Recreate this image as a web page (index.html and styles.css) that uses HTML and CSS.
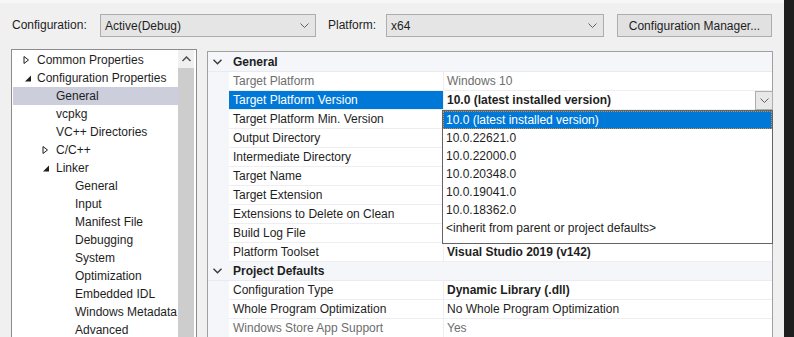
FILE: index.html
```html
<!DOCTYPE html>
<html lang="en">
  <head>
    <meta charset="UTF-8">
    <meta name="viewport" content="width=device-width, initial-scale=1.0">
    <title>Property Pages</title>
    <link rel="stylesheet" href="styles.css">
  </head>
<body>
  <div class="dialog">
    <div class="toolbar">
      <span class="tb-label">Configuration:</span>
      <div class="combo combo-config">
        <span>Active(Debug)</span>
        <svg class="chev" width="9" height="6" viewBox="0 0 9 6"><polyline points="0.5,0.5 4.5,4.5 8.5,0.5" /></svg>
      </div>
      <span class="tb-label tb-platform">Platform:</span>
      <div class="combo combo-platform">
        <span>x64</span>
        <svg class="chev" width="9" height="6" viewBox="0 0 9 6"><polyline points="0.5,0.5 4.5,4.5 8.5,0.5" /></svg>
      </div>
      <button class="btn" type="button">Configuration Manager...</button>
    </div>

    <div class="main">
      <!-- left tree -->
      <div class="tree">
        <ul class="tree-rows">
          <li class="lvl0"><span class="exp"><svg width="8" height="10" viewBox="0 0 8 10"><polygon class="closed" points="1,1.5 5.5,5 1,8.5" /></svg></span>Common Properties</li>
          <li class="lvl0"><span class="exp"><svg width="8" height="10" viewBox="0 0 8 10"><polygon class="open" points="8,2.5 8,8.5 2,8.5" /></svg></span>Configuration Properties</li>
          <li class="lvl1 selected"><span class="exp"></span>General</li>
          <li class="lvl1"><span class="exp"></span>vcpkg</li>
          <li class="lvl1"><span class="exp"></span>VC++ Directories</li>
          <li class="lvl1"><span class="exp"><svg width="8" height="10" viewBox="0 0 8 10"><polygon class="closed" points="1,1.5 5.5,5 1,8.5" /></svg></span>C/C++</li>
          <li class="lvl1"><span class="exp"><svg width="8" height="10" viewBox="0 0 8 10"><polygon class="open" points="7,2.5 7,8.5 1,8.5" /></svg></span>Linker</li>
          <li class="lvl2"><span class="exp"></span>General</li>
          <li class="lvl2"><span class="exp"></span>Input</li>
          <li class="lvl2"><span class="exp"></span>Manifest File</li>
          <li class="lvl2"><span class="exp"></span>Debugging</li>
          <li class="lvl2"><span class="exp"></span>System</li>
          <li class="lvl2"><span class="exp"></span>Optimization</li>
          <li class="lvl2"><span class="exp"></span>Embedded IDL</li>
          <li class="lvl2"><span class="exp"></span>Windows Metadata</li>
          <li class="lvl2"><span class="exp"></span>Advanced</li>
        </ul>
        <div class="vscroll">
          <div class="scroll-up">
            <svg width="9" height="6" viewBox="0 0 9 6"><polyline points="0.5,5 4.5,1 8.5,5" /></svg>
          </div>
          <div class="thumb"></div>
        </div>
      </div>

      <!-- property grid -->
      <div class="grid">
        <div class="cat">
          <span class="cat-exp"><svg width="9" height="6" viewBox="0 0 9 6"><polyline points="0.5,0.8 4.5,4.8 8.5,0.8" /></svg></span>
          General
        </div>
        <div class="prop disabled">
          <span class="gutter"></span>
          <span class="name">Target Platform</span>
          <span class="value">Windows 10</span>
        </div>
        <div class="prop active">
          <span class="gutter"></span>
          <span class="name">Target Platform Version</span>
          <span class="value bold">
            10.0 (latest installed version)
            <span class="drop-btn"><svg width="9" height="6" viewBox="0 0 9 6"><polyline points="0.5,0.5 4.5,4.5 8.5,0.5" /></svg></span>
            <ul class="droplist">
              <li class="picked">10.0 (latest installed version)</li>
              <li>10.0.22621.0</li>
              <li>10.0.22000.0</li>
              <li>10.0.20348.0</li>
              <li>10.0.19041.0</li>
              <li>10.0.18362.0</li>
              <li>&lt;inherit from parent or project defaults&gt;</li>
            </ul>
          </span>
        </div>
        <div class="prop">
          <span class="gutter"></span>
          <span class="name">Target Platform Min. Version</span>
          <span class="value"></span>
        </div>
        <div class="prop">
          <span class="gutter"></span>
          <span class="name">Output Directory</span>
          <span class="value"></span>
        </div>
        <div class="prop">
          <span class="gutter"></span>
          <span class="name">Intermediate Directory</span>
          <span class="value"></span>
        </div>
        <div class="prop">
          <span class="gutter"></span>
          <span class="name">Target Name</span>
          <span class="value"></span>
        </div>
        <div class="prop">
          <span class="gutter"></span>
          <span class="name">Target Extension</span>
          <span class="value"></span>
        </div>
        <div class="prop">
          <span class="gutter"></span>
          <span class="name">Extensions to Delete on Clean</span>
          <span class="value"></span>
        </div>
        <div class="prop">
          <span class="gutter"></span>
          <span class="name">Build Log File</span>
          <span class="value"></span>
        </div>
        <div class="prop">
          <span class="gutter"></span>
          <span class="name">Platform Toolset</span>
          <span class="value bold">Visual Studio 2019 (v142)</span>
        </div>
        <div class="cat">
          <span class="cat-exp"><svg width="9" height="6" viewBox="0 0 9 6"><polyline points="0.5,0.8 4.5,4.8 8.5,0.8" /></svg></span>
          Project Defaults
        </div>
        <div class="prop">
          <span class="gutter"></span>
          <span class="name">Configuration Type</span>
          <span class="value bold">Dynamic Library (.dll)</span>
        </div>
        <div class="prop">
          <span class="gutter"></span>
          <span class="name">Whole Program Optimization</span>
          <span class="value">No Whole Program Optimization</span>
        </div>
        <div class="prop disabled">
          <span class="gutter"></span>
          <span class="name">Windows Store App Support</span>
          <span class="value">Yes</span>
        </div>
      </div>
    </div>
  </div>
  <div class="edge"></div>
</body>
</html>
```

FILE: styles.css
```css
/* whole window */
body {
  margin: 0;
  height: 337px;
  overflow: hidden;
  display: flex;
  background-color: #f0f0f0;
  font-family: "Liberation Sans", Arial, sans-serif;
  font-size: 12px;
  color: #1e1e1e;
}

.dialog {
  width: 784px;
  display: flex;
  flex-direction: column;
}

/* dark strip of the IDE behind the dialog */
.edge {
  flex: 1;
  background-color: #1e1e1e;
}

/* top toolbar */
.toolbar {
  height: 49px;
  box-sizing: border-box;
  border-top: 3px solid #f7f7f7;
  padding: 11px 0 0 12px;
  display: flex;
  align-items: flex-start;
}

.tb-label {
  width: 88px;
  height: 23px;
  line-height: 23px;
}

.tb-platform {
  width: 58px;
  margin-left: 12px;
}

.combo {
  height: 23px;
  box-sizing: border-box;
  border: 1px solid #adadad;
  background-color: #e5e5e5;
  display: flex;
  align-items: center;
  padding: 0 6px 0 4px;
}

.combo span {
  flex: 1;
}

.combo-config {
  width: 216px;
}

.combo-platform {
  width: 218px;
}

.chev polyline,
.drop-btn polyline,
.scroll-up polyline {
  fill: none;
  stroke: #606060;
  stroke-width: 1;
}

.btn {
  margin-left: 13px;
  width: 155px;
  height: 23px;
  border: 1px solid #adadad;
  background-color: #e1e1e1;
  font-family: inherit;
  font-size: 12px;
  color: #1e1e1e;
  padding: 0;
}

/* main area */
.main {
  flex: 1;
  display: flex;
  align-items: flex-start;
  padding-left: 11px;
  gap: 10px;
  overflow: hidden;
}

/* left tree */
.tree {
  width: 186px;
  height: 300px;
  box-sizing: border-box;
  border: 1px solid #8c8c8c;
  border-bottom: none;
  background-color: #fff;
  display: flex;
  padding: 0 2px 0 1px;
}

.tree-rows {
  list-style: none;
  margin: 0;
  padding: 1px 0 0 0;
  width: 165px;
}

.tree-rows li {
  height: 18px;
  display: flex;
  align-items: center;
  white-space: nowrap;
}

.tree-rows li.selected {
  background-color: #cccedb;
}

.exp {
  width: 14px;
  height: 18px;
  display: flex;
  align-items: center;
}

.exp .closed {
  fill: #fff;
  stroke: #1e1e1e;
  stroke-width: 1;
}

.exp .open {
  fill: #1e1e1e;
}

.lvl0 {
  padding-left: 10px;
}

.lvl1 {
  padding-left: 29px;
}

.lvl2 {
  padding-left: 48px;
}

.vscroll {
  width: 16px;
  display: flex;
  flex-direction: column;
  background-color: #f0f0f0;
}

.scroll-up {
  height: 18px;
  display: flex;
  align-items: center;
  justify-content: center;
}

.scroll-up polyline {
  stroke: #505050;
  stroke-width: 1.5;
}

.thumb {
  flex: 1;
  background-color: #cdcdcd;
}

/* property grid */
.grid {
  width: 566px;
  height: 300px;
  box-sizing: border-box;
  margin-top: 2px;
  padding-top: 1px;
  border: 1px solid #a0a0a0;
  border-bottom: none;
  background-color: #f4f6fa;
}

.cat {
  height: 19px;
  box-sizing: border-box;
  border-bottom: 1px solid #e9ebf0;
  display: flex;
  align-items: center;
  font-weight: bold;
}

.cat-exp {
  width: 25px;
  padding-left: 5px;
  box-sizing: border-box;
  display: flex;
  align-items: center;
}

.cat-exp polyline {
  fill: none;
  stroke: #3c3c3c;
  stroke-width: 1.5;
}

.prop {
  height: 19px;
  display: flex;
}

.gutter {
  width: 21px;
}

.name,
.value {
  box-sizing: border-box;
  height: 19px;
  background-color: #fff;
  border-bottom: 1px solid #eeeef2;
  display: flex;
  align-items: center;
  white-space: nowrap;
}

.name {
  width: 214px;
  padding-left: 4px;
}

.value {
  flex: 1;
  border-left: 1px solid #eeeef2;
  padding-left: 3px;
}

.bold {
  font-weight: bold;
}

.disabled .name,
.disabled .value {
  color: #6d6d6d;
}

.active .name {
  background-color: #0078d7;
  color: #fff;
}

.active .value {
  position: relative;
}

.drop-btn {
  margin-left: auto;
  margin-right: -1px;
  width: 18px;
  height: 19px;
  box-sizing: border-box;
  border: 1px solid #adadad;
  background-color: #e8e8e8;
  display: flex;
  align-items: center;
  justify-content: center;
  align-self: flex-start;
}

/* open dropdown list */
.droplist {
  position: absolute;
  z-index: 2;
  top: 19px;
  left: -2px;
  right: -1px;
  margin: 0;
  padding: 0 0 6px 0;
  list-style: none;
  background-color: #fff;
  border: 1px solid #646464;
  font-weight: normal;
}

.droplist li {
  height: 18px;
  line-height: 18px;
  padding-left: 3px;
}

.droplist li.picked {
  background-color: #0078d7;
  color: #fff;
  outline: 1px dotted #e08a2c;
  outline-offset: -1px;
}
```
